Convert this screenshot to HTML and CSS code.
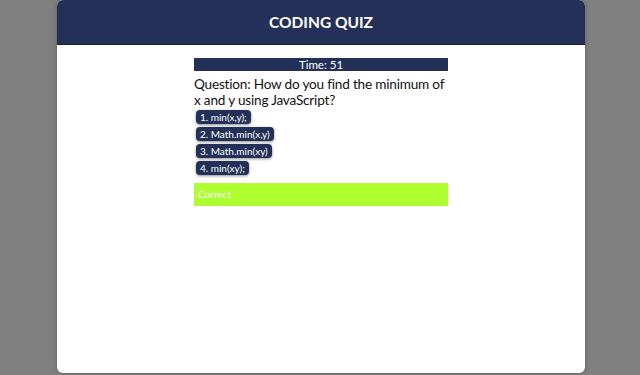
FILE: index.html
```html
<!DOCTYPE html>
<html>
<head>
<meta charset="utf-8">
<link rel="stylesheet" href="styles.css">
</head>
<body>
<div class="card">
  <header class="header">CODING QUIZ</header>
  <main class="content">
    <div class="timer">Time: 51</div>
    <h2 class="question">Question: How do you find the minimum of x and y using JavaScript?</h2>
    <div class="choices">
      <button class="choice">1. min(x,y);</button>
      <button class="choice">2. Math.min(x,y)</button>
      <button class="choice">3. Math.min(xy)</button>
      <button class="choice">4. min(xy);</button>
    </div>
    <div class="result">Correct</div>
  </main>
</div>
</body>
</html>
```
FILE: styles.css
```css
html, body {
  margin: 0;
  padding: 0;
  height: 100%;
}
body {
  background: #808080;
  font-family: "Lato", "Open Sans", sans-serif;
  overflow: hidden;
}
.card {
  width: 528px;
  height: 373px;
  margin: 0 0 0 57px;
  background: #ffffff;
  border-radius: 6px;
  box-shadow: 0 0 5px rgba(0, 0, 0, 0.25);
  overflow: hidden;
}
.header {
  height: 45px;
  background: #233158;
  border-bottom: 1px solid #141c33;
  box-sizing: border-box;
  display: flex;
  align-items: center;
  justify-content: center;
  color: #ffffff;
  font-size: 15.5px;
  font-weight: 700;
}
.content {
  width: 254px;
  margin: 13px auto 0;
}
.timer {
  height: 13px;
  line-height: 13px;
  background: #233158;
  color: #ffffff;
  font-size: 11.5px;
  font-weight: 400;
  text-align: center;
}
.question {
  margin: 5px 0 2px;
  font-size: 13.6px;
  letter-spacing: -0.2px;
  line-height: 16px;
  font-weight: 400;
  color: #111111;
}
.choices {
  display: flex;
  flex-direction: column;
  align-items: flex-start;
  gap: 3px;
  padding-left: 2px;
}
.choice {
  height: 14px;
  padding: 0 4px;
  border: none;
  border-radius: 4px;
  background: #233158;
  color: #ffffff;
  font-family: inherit;
  font-size: 10px;
  line-height: 14px;
  box-shadow: 0 1px 3px rgba(0, 0, 0, 0.45);
}
.result {
  margin-top: 8px;
  height: 23px;
  line-height: 23px;
  background: #adff2f;
  color: #ffffff;
  font-size: 10px;
  padding-left: 4px;
}
```
